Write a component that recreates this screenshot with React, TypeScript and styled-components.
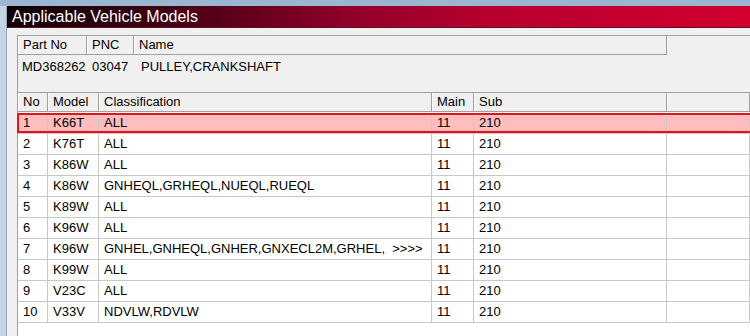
import React from 'react';
import styled, { createGlobalStyle } from 'styled-components';

const GlobalStyle = createGlobalStyle`
    html, body {
        margin: 0;
        padding: 0;
        background: #c3d3e6;
        overflow: hidden;
    }
`;

const Screen = styled.div`
    width: 750px;
    height: 336px;
    border-top: 6px solid #9bb6d0;
    padding-left: 6px;
    box-sizing: border-box;
    background: #c3d3e6;
    font-family: "Liberation Sans", Arial, sans-serif;
    font-size: 13px;
    color: #000;
`;

const Window = styled.div`
    height: 100%;
    background: #f0f0f0;
    border-left: 1px solid #9aa6b4;
    display: flex;
    flex-direction: column;
`;

const TitleBar = styled.div`
    height: 21px;
    flex: none;
    display: flex;
    align-items: center;
    padding-left: 5px;
    font-size: 16px;
    color: #fff;
    background: linear-gradient(90deg, #0c0006 0%, #3a0012 20%, #8e0028 45%, #b80030 65%, #d2002f 100%);
    border-bottom: 1px solid #6a0a20;
`;

const Content = styled.div`
    flex: 1;
    display: flex;
    flex-direction: column;
    padding: 7px 0 0 10px;
    min-height: 0;
`;

const PartPanel = styled.div`
    height: 56px;
    flex: none;
    border-top: 1px solid #a0a0a0;
    border-left: 1px solid #a0a0a0;
`;

const Grid = styled.div<{ $cols: string }>`
    display: grid;
    grid-template-columns: ${(p) => p.$cols};
`;

const HeaderCell = styled.div`
    height: 18px;
    line-height: 18px;
    padding-left: 5px;
    white-space: nowrap;
    overflow: hidden;
    background: #f0f0f0;
    border-bottom: 1px solid #a0a0a0;
    border-right: 1px solid #a0a0a0;
    box-shadow: inset 1px 0 0 #ffffff;
`;

const PartRow = styled.div`
    display: flex;
    height: 24px;
    line-height: 24px;
    padding-left: 4px;
    white-space: nowrap;
`;

const PartCell = styled.span<{ $w?: number }>`
    display: inline-block;
    width: ${(p) => (p.$w ? `${p.$w}px` : 'auto')};
`;

const ModelTable = styled.div`
    flex: 1;
    border-top: 1px solid #a0a0a0;
    border-left: 1px solid #a0a0a0;
    background: #fff;
    display: flex;
    flex-direction: column;
`;

const HeadRow = styled(Grid)`
    background: #f0f0f0;
`;

const Row = styled(Grid)<{ $selected?: boolean }>`
    position: relative;
    height: 21px;
    box-sizing: border-box;
    border-bottom: 1px solid #c8c8c8;
    background: ${(p) => (p.$selected ? '#ffbdbd' : '#fff')};
    ${(p) =>
        p.$selected &&
        `
        margin-top: 1px;
        &::after {
            content: '';
            position: absolute;
            left: -1px;
            right: 0;
            top: 0;
            bottom: 0;
            border: 2px solid #e3141c;
            border-right: none;
            pointer-events: none;
        }
    `}
`;

const Cell = styled.div`
    padding-left: 5px;
    line-height: 20px;
    white-space: pre;
    overflow: hidden;
    border-right: 1px solid #c8c8c8;
`;

const modelCols = '30px 51px 333px 42px 193px 1fr';

const rows = [
    { no: 1, model: 'K66T', cls: 'ALL' },
    { no: 2, model: 'K76T', cls: 'ALL' },
    { no: 3, model: 'K86W', cls: 'ALL' },
    { no: 4, model: 'K86W', cls: 'GNHEQL,GRHEQL,NUEQL,RUEQL' },
    { no: 5, model: 'K89W', cls: 'ALL' },
    { no: 6, model: 'K96W', cls: 'ALL' },
    { no: 7, model: 'K96W', cls: 'GNHEL,GNHEQL,GNHER,GNXECL2M,GRHEL,  >>>>' },
    { no: 8, model: 'K99W', cls: 'ALL' },
    { no: 9, model: 'V23C', cls: 'ALL' },
    { no: 10, model: 'V33V', cls: 'NDVLW,RDVLW' },
];

const App = () => {
    return (
        <>
            <GlobalStyle />
            <Screen>
                <Window>
                    <TitleBar>Applicable Vehicle Models</TitleBar>
                    <Content>
                        <PartPanel>
                            <Grid $cols="69px 47px 533px 1fr">
                                <HeaderCell>Part No</HeaderCell>
                                <HeaderCell>PNC</HeaderCell>
                                <HeaderCell>Name</HeaderCell>
                                <div />
                            </Grid>
                            <PartRow>
                                <PartCell $w={70}>MD368262</PartCell>
                                <PartCell $w={49}>03047</PartCell>
                                <PartCell>PULLEY,CRANKSHAFT</PartCell>
                            </PartRow>
                        </PartPanel>
                        <ModelTable>
                            <HeadRow $cols={modelCols}>
                                <HeaderCell>No</HeaderCell>
                                <HeaderCell>Model</HeaderCell>
                                <HeaderCell>Classification</HeaderCell>
                                <HeaderCell>Main</HeaderCell>
                                <HeaderCell>Sub</HeaderCell>
                                <HeaderCell />
                            </HeadRow>
                            {rows.map((r) => (
                                <Row key={r.no} $cols={modelCols} $selected={r.no === 1}>
                                    <Cell>{r.no}</Cell>
                                    <Cell>{r.model}</Cell>
                                    <Cell>{r.cls}</Cell>
                                    <Cell>11</Cell>
                                    <Cell>210</Cell>
                                    <Cell />
                                </Row>
                            ))}
                        </ModelTable>
                    </Content>
                </Window>
            </Screen>
        </>
    );
};

export default App;
